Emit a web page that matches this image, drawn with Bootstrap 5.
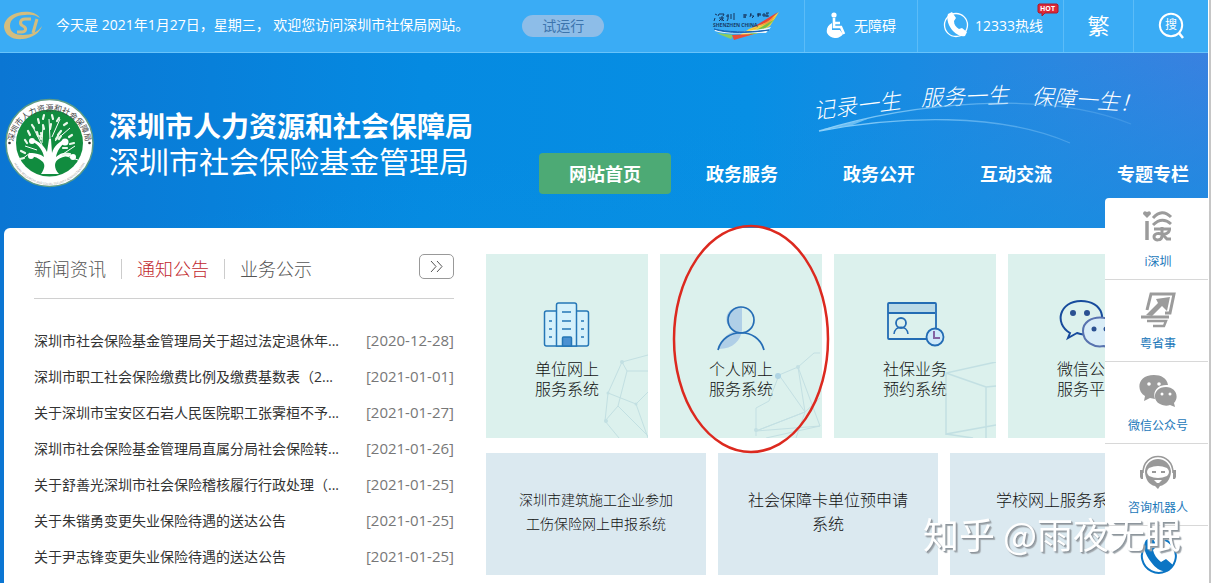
<!DOCTYPE html>
<html lang="zh-CN">
<head>
<meta charset="utf-8">
<meta name="viewport" content="width=device-width, initial-scale=1">
<title>深圳市社会保险基金管理局</title>
<link href="https://cdn.jsdelivr.net/npm/bootstrap@5.3.0/dist/css/bootstrap.min.css" rel="stylesheet">
<style>
body{font-family:"Open Sans","Noto Sans CJK SC",sans-serif;font-size:14px;background:#0b76d3;color:#333;overflow:hidden}
a{color:inherit;text-decoration:none}
.site{min-height:100vh}
.scroll-track{flex:0 0 3px;background:linear-gradient(90deg,#fff 1px,#c6c6c6 1px)}
.topbar{height:53px;background:#3aacf5;border-bottom:1px solid #68c3fa;color:#fff}
.emblem{width:56px;padding-left:3px}
.welcome{padding-bottom:3px}
.topbar .cell{height:52px;border-left:1px solid #5bbcf8;padding-bottom:2px}
.cell-access{width:113px}
.cell-hot{width:146px;gap:6px;padding-left:5px}
.cell-lang{width:70px;font-size:22px}
.cell-find{width:75px}
.trial{background:#8dbde8;color:#3d75ad;width:82px;height:22px;line-height:22px;margin-left:53px;font-size:14px}
.hot-tag{top:3px;right:4px}
.hero{height:175px;background:linear-gradient(170deg,transparent 50%,rgba(10,145,225,.6)),linear-gradient(90deg,#0b76d3 0,#058ae1 35%,#078fe4 62%,#2b87e0 88%,#3c80e0 100%)}
.brand{flex:0 0 539px;padding:42px 0 0 4px;gap:14px;color:#fff}
.brand h1{font-size:28px;line-height:36px;font-weight:700;margin:13px 0 0}
.brand h2{font-size:30px;line-height:36px;font-weight:400;margin:0}
.slogan{height:100px;padding-left:261px}
.slogan text{font-family:"Noto Sans CJK SC",sans-serif;font-size:22px;font-weight:300;fill:#fff;font-style:italic}
.mainnav{gap:5px;height:41px}
.mainnav a{flex:0 0 132px;line-height:42px;text-align:center;font-size:18px;font-weight:700;color:#fff;border-radius:4px}
.mainnav a.active{background:#4daa75}
.panel{margin-left:4px;background:#fff;border-radius:6px 0 0 0;min-height:355px;padding:26px 38px 8px 30px;gap:32px}
.news{flex:0 0 420px}
.news-head{height:45px;border-bottom:1px solid #d0d0d0}
.news-tabs{padding-top:5px}
.news-head button.tab{border:0;background:none;padding:0;font-size:18px;line-height:20px;color:#555;font-weight:300;height:20px}
.news-head button.tab + .tab{border-left:1px solid #ccc;margin-left:15px;padding-left:15px}
.news-head button.tab.on{color:#c1272d}
.more{width:35px;height:25px;border:1px solid #999;border-radius:5px;background:#fff;padding:0}
.news-list{margin:24px 0 0;padding:0}
.news-list li{height:36px;line-height:36px}
.news-list time{font-size:15px;line-height:34px;color:#777}
.tiles{display:grid;grid-template-columns:repeat(4,1fr);gap:12px;margin-bottom:15px}
.tile{height:184px;background:#dcf1ed;font-size:16px;line-height:20px;text-align:center;padding-top:43px;position:relative;font-weight:300;color:#111}
.tile .ico{display:block;margin:0 auto 8px}
.tile .mesh{position:absolute;right:0;bottom:0;opacity:.7}
.ring{position:absolute;left:12px;top:-30px;z-index:2}
.blocks{display:grid;grid-template-columns:repeat(3,1fr);gap:12px}
.block{height:122px;background:#dbe9f0;font-size:16px;line-height:24px;text-align:center;padding:35px 28px 0;font-weight:300;color:#111}
.block.compact{font-size:14px}
.sidebar{position:fixed;right:3px;top:198px;bottom:0;width:103px;background:#fff;border-radius:4px 0 0 0;z-index:3;overflow:hidden}
.sidebar a{display:block;height:82px;border-bottom:1px solid #d8d8d8;text-align:center;font-size:12px;line-height:18px;color:#1c78ba;padding:10px 0 0 3px}
.sidebar svg{display:block;margin:0 auto 7px}
.sign{position:fixed;right:30px;bottom:24px;z-index:4;font-size:36px;line-height:52px;color:#fff;font-family:"Noto Sans CJK SC",sans-serif;text-shadow:1px 1px 1px #8b949b,2px 2px 1px #a5abb0;pointer-events:none}
</style>
</head>
<body>
<div class="d-flex site">
<div class="flex-grow-1 overflow-hidden">
<header>
  <div class="topbar d-flex align-items-center">
    <div class="emblem"><svg width="42" height="32" viewBox="0 0 42 32"><path d="M37 8C32 1 22 1 14 3 6 5 1 11 1 17c1 9 9 13 19 12 9-1 17-6 19-13-4 6-11 9-19 9C12 25 7 22 7 16 7 9 13 5 22 5c6-1 11 0 15 3z" fill="#d3bd7e"/><path d="M28 9h-6c-5 0-6 5-2 7 4 2 3 6-1 6h-5M34 9l-4 14" fill="none" stroke="#d3bd7e" stroke-width="3"/></svg></div>
    <div class="welcome text-nowrap">今天是 2021年1月27日，星期三，&nbsp;欢迎您访问深圳市社保局网站。</div>
    <div class="trial rounded-pill text-center">试运行</div>
    <div class="ms-auto d-flex align-items-center">
      <a href="#" class="me-4" aria-label="深圳政府在线"><svg width="68" height="30" viewBox="0 0 68 30"><path d="M67 1 50 13 37 18 22 28 46 22 58 15z" fill="#f5d43f"/><path d="M66 1 48 12 39 17 56 11z" fill="#e84436"/><path d="M64 5 45 17 35 20 57 12z" fill="#f49a38"/><path d="m63 8-7 7-10 7-12 3z" fill="#75bf4b"/><path d="M2 18c14 4 37 3 57-2l-5 6c-16 0-40 2-51-2z" fill="#e8f5fc"/><path d="M2 18c12 3 32 4 55 1-18 3-42 4-55-1z" fill="#1565b8" stroke="#1565b8"/><path d="m5 22 17 2-3 4-10-4z" fill="#8bcd60"/><path d="m20 24 22-1-20 6z" fill="#e84d3a"/><path d="m3 3 2 1m-2 3-1 3m5-7-1 2m1-2h5l-1 2M7 7h5m-2-2v5m-1-2-2 2m3-2 2 2m4-7v5l-1 2m-1-5h3m2-2v5m3-6v7m9-5h4m-2-1v4m-2-1h3m4-2h2m-1-2-1 4m2-1h2l-2 2m5-4h4m-2-1-1 4m-1-2h4m3-2v4m-2-2h4m0-2h3m-2 0v4m-2-1h4" fill="none" stroke="#16355d"/><text x="1" y="16" font-family="Open Sans" font-size="5" font-weight="700" fill="#173c69">SHENZHEN CHINA</text></svg></a>
      <a href="#" class="cell cell-access d-flex align-items-center justify-content-center gap-2"><svg width="20" height="26" viewBox="0 0 20 26"><circle cx="8" cy="3" r="2.6" fill="#fff"/><path d="M8 6v9h7l3 7M8 11h6" fill="none" stroke="#fff" stroke-width="2.600"/><path d="M6 11v7h8l3 4c-4 6-13 5-16-1-1-4 1-8 5-10z" fill="#fff"/></svg>无障碍</a>
      <a href="#" class="cell cell-hot d-flex align-items-center justify-content-center position-relative"><svg width="26" height="26" viewBox="0 0 26 26"><circle cx="13" cy="13" r="11.5" fill="none" stroke="#fff" stroke-width="1.300"/><path d="M5 2 9 0l4 6-2 3c0 4 2 6 5 8l3-1 5 4-2 4c-4 1-8-1-12-5C6 15 3 7 5 2z" fill="#fff"/></svg>12333热线
        <svg class="hot-tag position-absolute" width="22" height="14" viewBox="0 0 22 14"><path d="M2 1h18l1 1v7l-1 1H8l-3 3v-3H2l-1-1V2z" fill="#df2937" stroke="#a91d30"/><text x="3" y="8" font-family="Open Sans" font-weight="700" font-size="7" fill="#fff">HOT</text></svg></a>
      <a href="#" class="cell cell-lang d-flex align-items-center justify-content-center">繁</a>
      <a href="#" class="cell cell-find d-flex align-items-center justify-content-center" aria-label="搜索"><svg width="28" height="28" viewBox="0 0 28 28"><circle cx="14" cy="14" r="11.2" fill="none" stroke="#fff" stroke-width="2"/><path d="m22 22 4 5" stroke="#fff" stroke-width="2.5"/><text x="8" y="18" font-family="Noto Sans CJK SC" font-size="12" fill="#fff">搜</text></svg></a>
    </div>
  </div>
  <div class="hero d-flex">
    <div class="brand d-flex text-nowrap">
      <svg width="91" height="94" viewBox="0 0 91 94" class="flex-shrink-0"><defs><path id="arcTop" d="M9 52a36.500 36.500 0 1 1 73 0"/><path id="arcLow" d="M5.500 50a40 40 0 0 0 80 0"/></defs><circle cx="45.500" cy="48" r="43.500" fill="#fff" stroke="#5e9c85" stroke-width="1.500"/><circle cx="45.500" cy="48" r="33.500" fill="#118c3f"/>
        <text font-family="Noto Sans CJK SC" font-size="8" fill="#444" text-anchor="middle"><textPath href="#arcTop" startOffset="50%">深圳市人力资源和社会保障局</textPath></text>
        <text font-family="Open Sans" font-size="3" fill="#999" text-anchor="middle"><textPath href="#arcLow" startOffset="50%">HUMAN RESOURCES AND SOCIAL SECURITY ADMINISTRATION</textPath></text>
        <circle cx="5.500" cy="48" r="1.300" fill="#333"/><circle cx="85.500" cy="48" r="1.300" fill="#333"/>
        <path d="M37 79c4-6 4-9 2-12-4-4-9-6-14-6l1-3c6 0 10 1 14 4-1-6-5-12-11-15l2-2c6 3 10 7 12 12l2-13h2l1 14c2-7 7-11 13-14l2 2c-6 4-10 10-11 16 4-4 8-5 14-4l1 3c-8 0-16 3-16 9 0 3 1 6 4 9z" fill="#fff"/>
        <path d="M38 50 30 34m8 14 1-18m7 14-1-20m3 18 8-18m-5 22 15-13M33 55l-12-4m38 8 12-8m-45 7-8 6m42-4 14 5" stroke="#fff" fill="none"/>
        <g fill="#fff"><circle cx="27" cy="61" r="3"/><circle cx="28" cy="46" r="3"/><circle cx="61" cy="47" r="3.500"/><circle cx="69" cy="62" r="3"/></g>
        <g stroke="#e9f8ea" stroke-width="2.200" stroke-linecap="round"><path d="m21 45 2 3m1-12 2 4m2-10 2 3m4-9 1 4m5-8-1 4m9-4 1 4m6-1-2 3m10 2-3 2m-21 0 1 4m7-5-1 5m-13 3 1 4m23-5-3 4m14 0-3 2m5 6-4 1m-7 4h4m3 6h-4m-45-3 4 2m-5 6 4-1m17-25 1 3m19 0-2 3m7 15-3 1M36 41l1 3m17-3-2 3"/></g></svg>
      <div><h1>深圳市人力资源和社会保障局</h1><h2>深圳市社会保险基金管理局</h2></div>
    </div>
    <div class="flex-grow-1 overflow-hidden">
      <div class="slogan"><svg width="400" height="98" viewBox="0 0 400 98"><text transform="translate(14 66) rotate(-7)">记录一生</text><text transform="translate(121 53) rotate(-2)">服务一生</text><text transform="translate(231 51) rotate(4)">保障一生！</text><defs><linearGradient id="fade"><stop stop-color="#8fd2fa"/><stop offset="1" stop-color="#6bb5f0" stop-opacity=".3"/></linearGradient></defs><path d="M19 78C110 50 245 36 331 71M19 78c80-15 180-19 251 12" fill="none" stroke="url(#fade)" stroke-width="1.300"/><path d="M19 77 70 65 50 73z" fill="#8fd2fa" opacity=".7"/></svg></div>
      <nav class="mainnav d-flex"><a href="#" class="active">网站首页</a><a href="#">政务服务</a><a href="#">政务公开</a><a href="#">互动交流</a><a href="#">专题专栏</a></nav>
    </div>
  </div>
</header>
<main class="panel d-flex">
  <section class="news">
    <div class="news-head d-flex align-items-start">
      <div class="news-tabs d-flex"><button type="button" class="tab">新闻资讯</button><button type="button" class="tab on">通知公告</button><button type="button" class="tab">业务公示</button></div>
      <button type="button" class="more ms-auto d-flex align-items-center justify-content-center" aria-label="更多"><svg width="13" height="11" viewBox="0 0 13 11"><path d="m1 0 5 5.500L1 11M7 0l5 5.500L7 11" fill="none" stroke="#555"/></svg></button>
    </div>
    <ul class="news-list list-unstyled">
      <li class="d-flex justify-content-between"><a href="#">深圳市社会保险基金管理局关于超过法定退休年...</a><time>[2020-12-28]</time></li>
      <li class="d-flex justify-content-between"><a href="#">深圳市职工社会保险缴费比例及缴费基数表（2...</a><time>[2021-01-01]</time></li>
      <li class="d-flex justify-content-between"><a href="#">关于深圳市宝安区石岩人民医院职工张霁桓不予...</a><time>[2021-01-27]</time></li>
      <li class="d-flex justify-content-between"><a href="#">深圳市社会保险基金管理局直属分局社会保险转...</a><time>[2021-01-26]</time></li>
      <li class="d-flex justify-content-between"><a href="#">关于舒善光深圳市社会保险稽核履行行政处理（...</a><time>[2021-01-25]</time></li>
      <li class="d-flex justify-content-between"><a href="#">关于朱锴勇变更失业保险待遇的送达公告</a><time>[2021-01-25]</time></li>
      <li class="d-flex justify-content-between"><a href="#">关于尹志锋变更失业保险待遇的送达公告</a><time>[2021-01-25]</time></li>
    </ul>
  </section>
  <section class="flex-grow-1">
    <div class="tiles">
      <a href="#" class="tile"><svg class="mesh" width="44" height="84" viewBox="0 0 44 84"><path d="M44 1 18 8 4 39 1 67l14 17M18 8l5 9h21M23 17l-9 35L1 67M4 39l28 11 12-12M32 50l12 34M14 52l30 30" fill="none" stroke="#b8d9de"/><g fill="#b8d9de"><circle cx="18" cy="8" r="2"/><circle cx="4" cy="39" r="1.500"/><circle cx="2" cy="67" r="2"/><circle cx="32" cy="50" r="1.500"/></g></svg><svg class="ico" width="60" height="54" viewBox="0 0 60 54"><g fill="#d5f1fb" stroke="#2577b6" stroke-width="1.500"><rect x="7.500" y="14" width="44" height="35" rx="2"/><path d="M19.500 49V8q0-2 2-2h16q2 0 2 2v41z"/><path d="M25.500 49v-8q0-1 1-1h7q1 0 1 1v8z" fill="#4b91d2"/></g><path d="M25 15h9m-9 9h9m-9 8h9M12 24h3m-3 8h3m-3 8h3m29-16h3m-3 8h3m-3 8h3" stroke="#2577b6" stroke-width="1.500"/></svg>单位网上<br>服务系统</a>
      <a href="#" class="tile"><svg class="mesh" width="68" height="86" viewBox="0 0 68 86"><path d="M66 1H60L44 15 25 23l26 37L44 15l22 59M51 60 2 79l64-5M2 56v28M2 56l13-7L25 23M2 79l49-19 15-14M12 86l54-12M42 86l9-26" fill="none" stroke="#b9d9df"/><circle cx="24" cy="24" r="3" fill="#9cc9e0"/><circle cx="44" cy="15" r="2" fill="#b9d9df"/><circle cx="2" cy="78" r="2" fill="#b9d9df"/></svg><svg class="ico" width="60" height="54" viewBox="0 0 60 54"><path d="M31 10v23c-1 10-9 19-23 19 2-9 8-16 16-18-8-5-10-10-8-16 2-5 8-9 15-8z" fill="#b0cfe7"/><g fill="none" stroke="#256db5" stroke-width="1.700"><circle cx="30" cy="23" r="13"/><path d="M7 53c6-23 40-23 46 0"/></g></svg>个人网上<br>服务系统<svg class="ring" width="158" height="230" viewBox="0 0 158 230"><ellipse cx="79" cy="115" rx="77" ry="113" fill="none" stroke="#dc291f" stroke-width="2.500"/></svg></a>
      <a href="#" class="tile"><svg class="mesh" width="52" height="76" viewBox="0 0 52 76"><path d="m52 0-50 11v61l50-9M2 11l40 14 10-1M42 25v51M2 72l27 4" fill="none" stroke="#b8d9df" stroke-width="1.500"/></svg><svg class="ico" width="60" height="54" viewBox="0 0 60 54"><path d="M3 7h47v9H3z" fill="#b9d9e7"/><g fill="none" stroke="#236cb4" stroke-width="1.800"><rect x="3" y="6" width="48" height="36" rx="1"/><path d="M3 16h47"/><circle cx="16" cy="26" r="5"/><path d="M9 37c1-9 13-9 14 0" stroke-width="1.500"/><circle cx="50" cy="40" r="8.500" fill="#cee9fa"/></g><path d="M49 34v7h6" stroke="#8463a3" stroke-width="2" fill="none"/></svg>社保业务<br>预约系统</a>
      <a href="#" class="tile"><svg class="ico" width="60" height="54" viewBox="0 0 60 54"><g fill="#dcf1ed" stroke="#174b9c" stroke-width="2"><path d="M11 36C-5 27 0 4 22 4s28 21 12 30c-5 4-11 4-16 2l-9 5z"/><path d="M51 46c5-3 7-7 7-12 0-18-34-18-34 0 0 11 11 17 21 15l10 4z" fill="#d9edf7" stroke="#5873af"/></g><g fill="#2b5192"><circle cx="14" cy="16" r="3"/><circle cx="28" cy="16" r="3"/><circle cx="35" cy="32" r="2.500"/><circle cx="47" cy="32" r="2.500"/></g></svg>微信公众<br>服务平台</a>
    </div>
    <div class="blocks">
      <a href="#" class="block compact">深圳市建筑施工企业参加工伤保险网上申报系统</a>
      <a href="#" class="block">社会保障卡单位预申请系统</a>
      <a href="#" class="block">学校网上服务系统</a>
    </div>
  </section>
</main>
</div>
<div class="scroll-track"></div>
</div>
<aside class="sidebar">
  <a href="#"><svg width="36" height="38" viewBox="0 0 36 38"><path d="m7 10-4-4q0-4 4-2 4-2 4 2z" fill="#9b9b9b"/><g fill="none" stroke="#9b9b9b" stroke-width="3.500"><path d="M7 13v19"/><path d="M13 10q9-10 18-1M13 17q9-9 18-1M14 21h17M22 19v9c0 5-8 5-8 1 0-4 5-4 8-3 6 1 9-4 6-5"  stroke-width="3"/><path d="m22 26 5 5h4" stroke-width="3"/></g></svg>i深圳</a>
  <a href="#"><svg width="38" height="38" viewBox="0 0 38 38"><g fill="none" stroke="#9b9b9b" stroke-width="3"><path d="M8 20 12 4h23l-4 19h-5M2 27h28"/><path d="M8 31h19l-2 5H14" stroke-width="2.500"/></g><path d="m17 9 14-2-3 14-5-5L13 26l-6-1 12-12z" fill="#9b9b9b"/></svg>粤省事</a>
  <a href="#"><svg width="38" height="38" viewBox="0 0 38 38"><path d="M15 3C-2 3-3 19 6 24l-1 5 6-3 5 1c-3-9 4-15 13-14C28 6 22 3 15 3zM27 15c-13 0-14 14-6 17 4 2 7 2 10 1l5 2-1-4c6-7 1-16-8-16z" fill="#9b9b9b"/><g fill="#fff"><circle cx="10" cy="12" r="1.800"/><circle cx="20" cy="12" r="1.800"/><circle cx="23" cy="22" r="1.500"/><circle cx="31" cy="22" r="1.500"/></g></svg>微信公众号</a>
  <a href="#"><svg width="38" height="38" viewBox="0 0 38 38"><path d="M4 19C4-3 34-3 34 19" fill="none" stroke="#999" stroke-width="1.500"/><path d="M6 17C8 1 30 1 32 17c0 8-5 14-11 15l-2 3-3-3C10 31 6 25 6 17zM1 16h3v9H2l-1-2zm33 0h3v7l-1 2h-2z" fill="#999"/><path d="M10 14q9-4 18 0 4 4 0 8-9 4-18 0-4-4 0-8z" fill="#fff"/><path d="M13 18h4m5 0h4" stroke="#999" stroke-width="2"/><path d="M15 26h8l-3 3h-2z" fill="#fff"/></svg>咨询机器人</a>
  <a href="#" aria-label="电话"><svg width="38" height="40" viewBox="0 0 38 40"><path d="M22 3A17 17 0 1 1 6 10" fill="none" stroke="#0b75c4" stroke-width="2"/><path d="m7 4 6-3 5 9-4 4c1 5 4 9 8 12l5-3 7 6-4 6c-6 2-13-2-18-9C6 18 3 10 7 4z" fill="#0b75c4"/></svg></a>
</aside>
<div class="sign">知乎 @雨夜无眠</div>
<script src="https://cdn.jsdelivr.net/npm/bootstrap@5.3.0/dist/js/bootstrap.bundle.min.js"></script>
</body>
</html>
